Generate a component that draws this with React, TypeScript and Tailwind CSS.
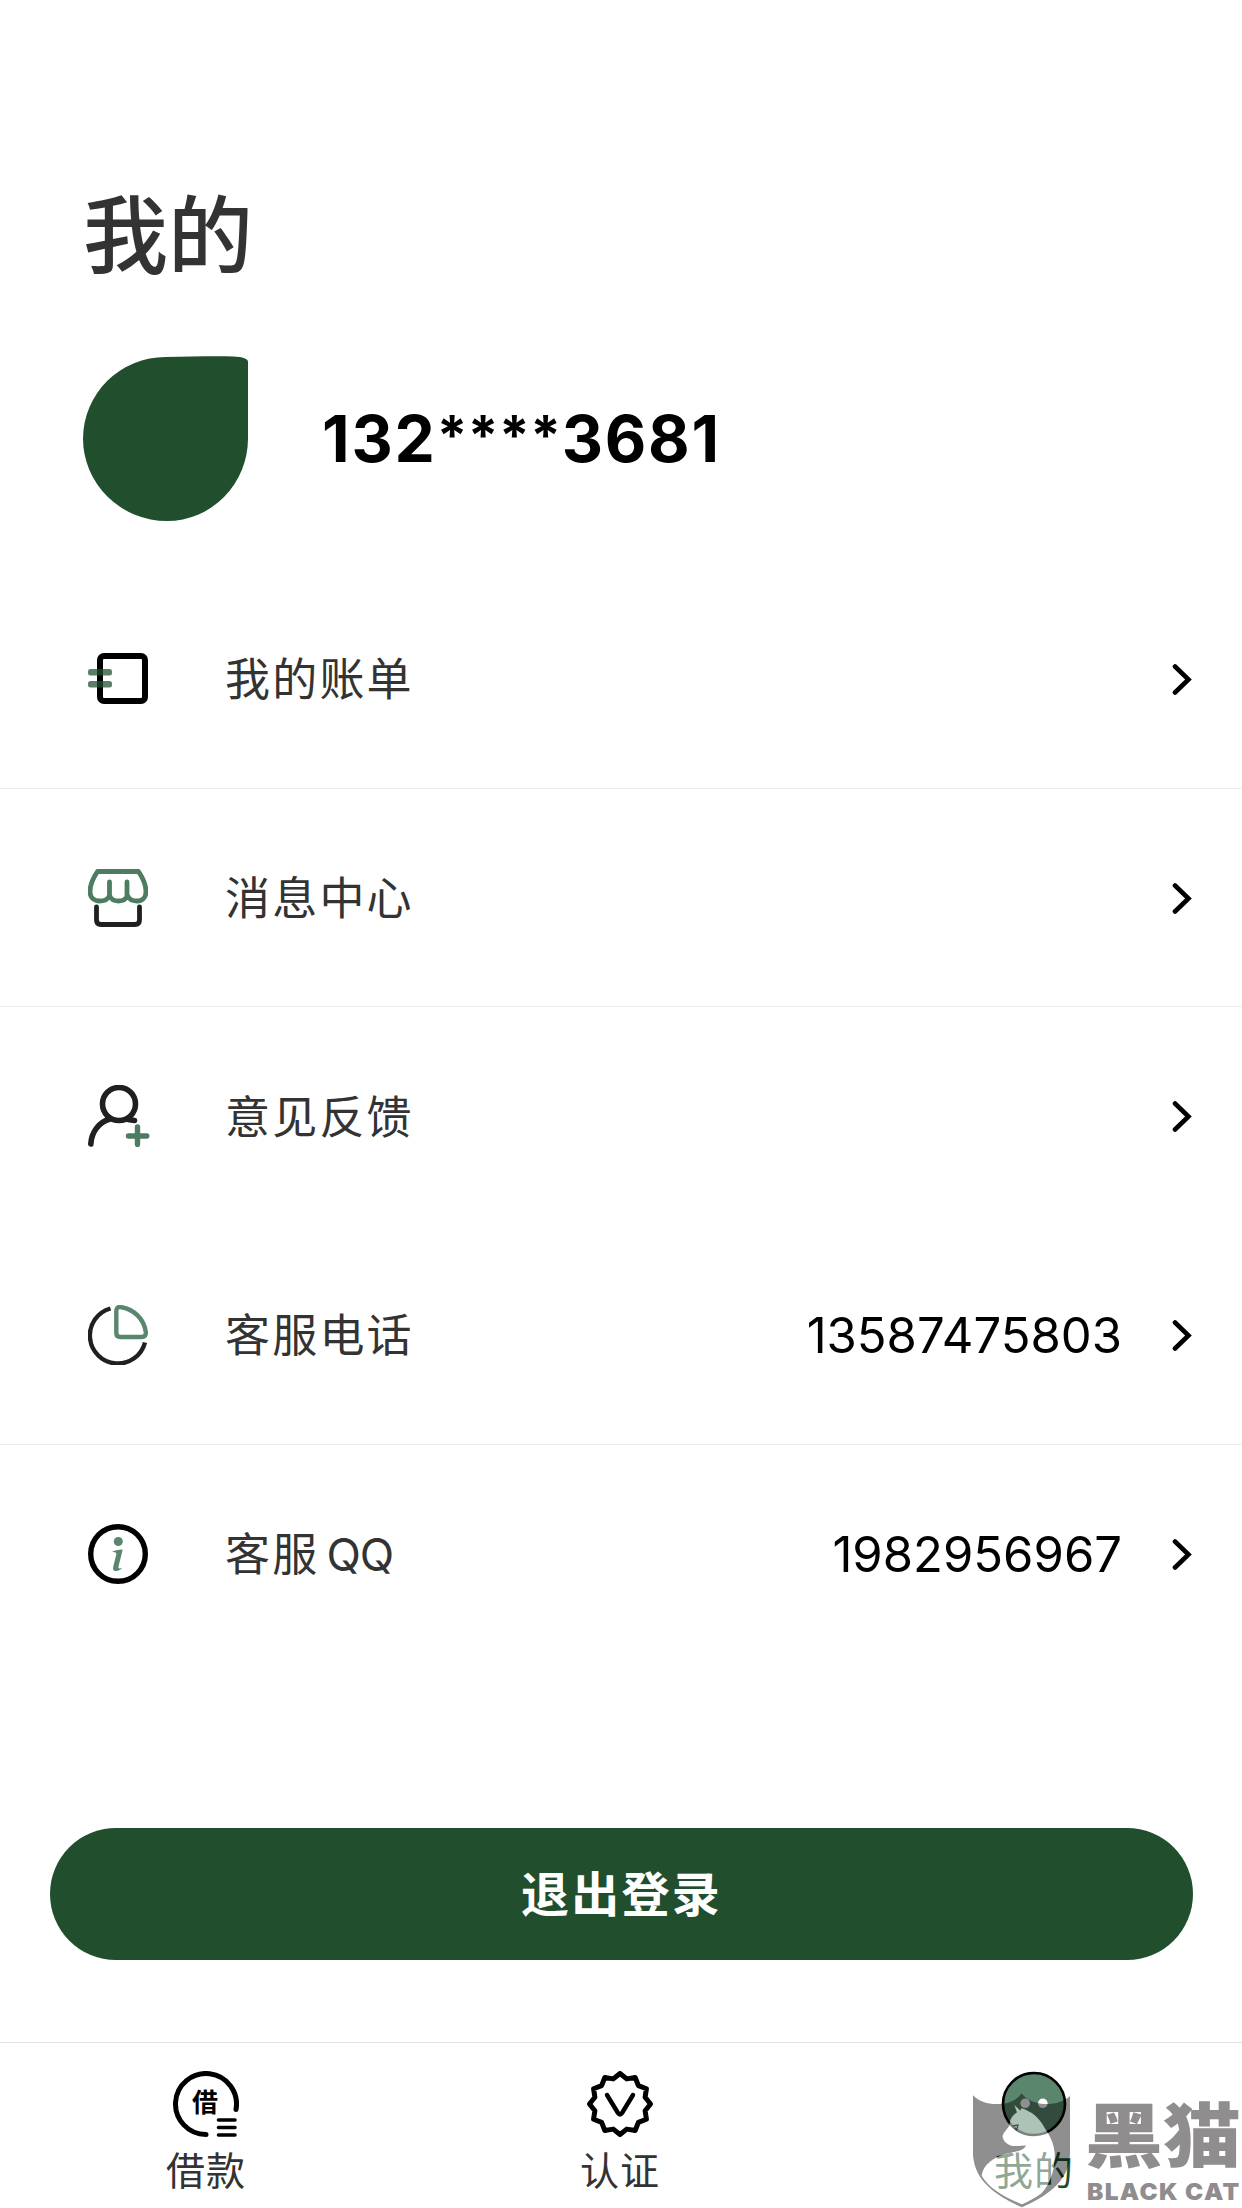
import type { ReactNode } from "react";

const BillIcon = () => (
  <svg width="60" height="60" viewBox="0 0 60 60" fill="none">
    <rect x="12" y="7" width="45" height="45" rx="4" stroke="#000" strokeWidth="6" />
    <rect x="0" y="20" width="24" height="6.500" rx="2.500" fill="#214e2d" fillOpacity="0.73" />
    <rect x="0" y="32" width="24" height="6.500" rx="2.500" fill="#214e2d" fillOpacity="0.73" />
  </svg>
);

const ShopIcon = () => (
  <svg width="60" height="60" viewBox="0 0 60 60" fill="none" strokeLinecap="round" strokeLinejoin="round">
    <path
      d="M9.500 3.500H50.500C54.500 9.500 58 17 58 23.500C58 29.500 54 33 49 33C44.500 33 41 31.500 39.500 27.500C38 31.500 35 33 30.500 33C26 33 23 31.500 21.500 27.500C20 31.500 16.500 33 12 33C6 33 2 29.500 2 23.500C2 17 5.500 9.500 9.500 3.500ZM21.500 14V28M39 14V28"
      stroke="#4d7c60"
      strokeWidth="4.800"
    />
    <path d="M8.500 39V52Q8.500 56.500 13 56.500H47Q51.500 56.500 51.500 52V39" stroke="#1f2022" strokeWidth="4.800" />
  </svg>
);

const FeedbackIcon = () => (
  <svg width="62" height="62" viewBox="0 0 62 62" fill="none" strokeLinecap="round">
    <circle cx="31" cy="19" r="16.500" stroke="#1f2022" strokeWidth="5.600" />
    <path d="M2.800 59C3.500 47 11 37 22 34M40 34.500L46.500 35.500" stroke="#1f2022" strokeWidth="5.600" />
    <path d="M49.500 42V59.500M40.500 51H58.800" stroke="#4d7c60" strokeWidth="5.400" />
  </svg>
);

const PhoneIcon = () => (
  <svg width="60" height="60" viewBox="0 0 60 60" fill="none">
    <path d="M22.500 3.500A28 28 0 1 0 57 37.500" stroke="#1f2022" strokeWidth="4.400" />
    <path
      d="M28.300 6Q28.300 1.800 32.500 2C46 4 56 14 57.800 27Q58.300 32 53.500 32H32.500Q28.300 32 28.300 28Z"
      stroke="#5a866d"
      strokeWidth="4.400"
    />
  </svg>
);

const InfoIcon = () => (
  <svg width="60" height="60" viewBox="0 0 60 60" fill="none">
    <circle cx="30" cy="30" r="27.300" stroke="#000" strokeWidth="5.400" />
    <circle cx="30.300" cy="17.500" r="4.500" fill="#5a866d" />
    <path
      d="M24 28C26 26.500 30 25.500 34.700 25.500L30.500 42.500C30 45 32 45 34.500 43.500C32 46.500 29.500 47.200 27.500 47C24.500 46.800 24.800 44 25.500 41.500L28.300 30.500C28.800 28.500 27 27.800 24 28Z"
      fill="#5a866d"
    />
  </svg>
);

const Chevron = () => (
  <svg className="ml-[50px]" width="20" height="32" viewBox="0 0 20 32" fill="none">
    <path d="M3 3.500L16.500 16.500L3 29.500" stroke="#000" strokeWidth="4.600" strokeLinecap="round" />
  </svg>
);

const LoanIcon = () => (
  <div className="relative size-[66px]">
    <svg width="66" height="66" viewBox="0 0 66 66" fill="none" stroke="#000" strokeLinecap="round">
      <path d="M63 38.500A30.500 30.500 0 1 0 33 63.500" strokeWidth="5" />
      <path d="M45.500 49H62M45.500 56.500H62M45.500 64H62" strokeWidth="3.600" />
    </svg>
    <span className="absolute left-[19px] top-[18px] text-[26px] leading-[28px] font-bold text-black">借</span>
  </div>
);

const badgePoints = Array.from({ length: 24 }, (_, i) => {
  const r = i % 2 === 0 ? 30.5 : 26;
  const a = (i * Math.PI) / 12 - Math.PI / 2;
  return `${(33 + r * Math.cos(a)).toFixed(2)},${(33 + r * Math.sin(a)).toFixed(2)}`;
}).join(" ");

const VerifyIcon = () => (
  <svg width="66" height="66" viewBox="0 0 66 66" fill="none" stroke="#000" strokeLinecap="round" strokeLinejoin="round">
    <polygon points={badgePoints} strokeWidth="5" />
    <path d="M20 24L31 42Q33 45 35 42L46 24" strokeWidth="4.400" />
  </svg>
);

const MineIcon = () => (
  <svg width="66" height="66" viewBox="0 0 66 66">
    <circle cx="33" cy="33" r="31" fill="#5a866d" stroke="#000" strokeWidth="2.600" />
    <circle cx="24.200" cy="32.300" r="4.800" fill="#fff" />
    <circle cx="41.800" cy="32.300" r="4.800" fill="#fff" />
  </svg>
);

type RowProps = { icon: ReactNode; label: ReactNode; value?: string; line?: boolean };

function Row({ icon, label, value, line }: RowProps) {
  return (
    <div
      className={`flex h-[218.7px] items-center border-b pl-[88px] pr-[50px] ${line ? "border-[#ededed]" : "border-transparent"}`}
    >
      <div className="flex w-[62px] shrink-0">{icon}</div>
      <span className="ml-[75px] pt-[2px] text-[45px] leading-none tracking-[2.2px] text-[#333]">{label}</span>
      <span className="ml-auto pt-[2px] text-[49px] leading-none text-black">{value}</span>
      <Chevron />
    </div>
  );
}

function Tab({ icon, label, active }: { icon: ReactNode; label: string; active?: boolean }) {
  return (
    <div className="flex flex-1 flex-col items-center pr-[2px] pt-[28px]">
      {icon}
      <span className={`mt-[13px] text-[39px] leading-[42px] tracking-[1px] ${active ? "text-[#214e2d]" : "text-[#333]"}`}>
        {label}
      </span>
    </div>
  );
}

function Watermark() {
  return (
    <div className="absolute bottom-0 right-0 h-[168px] w-[292px] overflow-hidden">
      <svg className="absolute inset-0" width="292" height="168" viewBox="0 0 876 504">
        <path
          fill="#000"
          fillOpacity="0.44"
          fillRule="evenodd"
          d="M69 166C92 190 125 195 158 191C185 188 204 176 215 160C226 176 247 188 273 191C307 195 338 188 360 168V345C355 430 285 470 216 502C147 470 75 430 69 345ZM193 195L201 217C186 228 179 240 179 255C175 266 158 278 158 290C162 309 180 318 194 318C208 319 218 315 229 317C220 332 198 335 170 341C130 352 100 373 95 407C118 446 164 471 216 493C243 480 263 469 275 459C305 425 314 385 314 342C312 309 298 285 284 264C268 233 244 214 214 205L211 212Z"
        />
        <path
          fill="#fff"
          fillOpacity="0.5"
          d="M193 195L201 217C186 228 179 240 179 255C175 266 158 278 158 290C162 309 180 318 194 318C208 319 218 315 229 317C220 332 198 335 170 341C130 352 100 373 95 407C118 446 164 471 216 493C243 480 263 469 275 459C305 425 314 385 314 342C312 309 298 285 284 264C268 233 244 214 214 205L211 212Z"
        />
        <path d="M188 258L204 255L200 270L194 264" fill="none" stroke="#333" strokeOpacity="0.8" strokeWidth="4" />
      </svg>
      <span className="absolute left-[135px] top-[57px] origin-left scale-y-[0.9] text-[78px] leading-[80px] font-black whitespace-nowrap text-[#8f8d8d]">
        黑猫
      </span>
      <span className="absolute left-[137px] top-[139px] origin-left scale-x-[1.06] text-[23px] leading-[26px] font-black tracking-[1.300px] whitespace-nowrap text-[#8f8d8d]">
        BLACK CAT
      </span>
    </div>
  );
}

export default function App() {
  return (
    <div className="relative flex h-[2208px] w-[1242px] flex-col overflow-hidden bg-white font-[Inter,'Noto_Sans_CJK_SC',sans-serif]">
      <h1 className="mt-[187px] pl-[83px] text-[85px] leading-[100px] font-medium text-[#333]">我的</h1>

      <div className="mt-[69px] flex h-[165px] items-center pl-[83px]">
        <svg width="165" height="165" viewBox="0 0 165 165">
          <path
            d="M82.500 1C105 1 125 0 150 0.500Q165 1 165 6V82.500A81 82.500 0 0 1 84 165A84 82.500 0 0 1 0 82.500A82.500 82 0 0 1 82.500 1Z"
            fill="#214e2d"
          />
        </svg>
        <span className="ml-[74px] flex items-baseline text-[64px] leading-none font-bold tracking-[1.800px] text-black">
          132<span className="relative -top-[7px] text-[55px] tracking-[0.500px]">****</span>3681
        </span>
      </div>

      <div className="mt-[49px]">
        <Row icon={<BillIcon />} label="我的账单" line />
        <Row icon={<ShopIcon />} label="消息中心" line />
        <Row icon={<FeedbackIcon />} label="意见反馈" />
        <Row icon={<PhoneIcon />} label="客服电话" value="13587475803" line />
        <Row
          icon={<InfoIcon />}
          label={
            <>
              客服<span className="ml-[7px] tracking-[-1px]">QQ</span>
            </>
          }
          value="1982956967"
        />
      </div>

      <button className="ml-[50px] mr-[49px] mt-[164.5px] h-[132px] rounded-full bg-[#214e2d] pt-[2px] text-[48px] font-bold tracking-[2.200px] text-white">
        退出登录
      </button>

      <div className="mt-auto flex h-[166px] border-t border-[#e0e0e0]">
        <Tab icon={<LoanIcon />} label="借款" />
        <Tab icon={<VerifyIcon />} label="认证" />
        <Tab icon={<MineIcon />} label="我的" active />
      </div>

      <Watermark />
    </div>
  );
}
